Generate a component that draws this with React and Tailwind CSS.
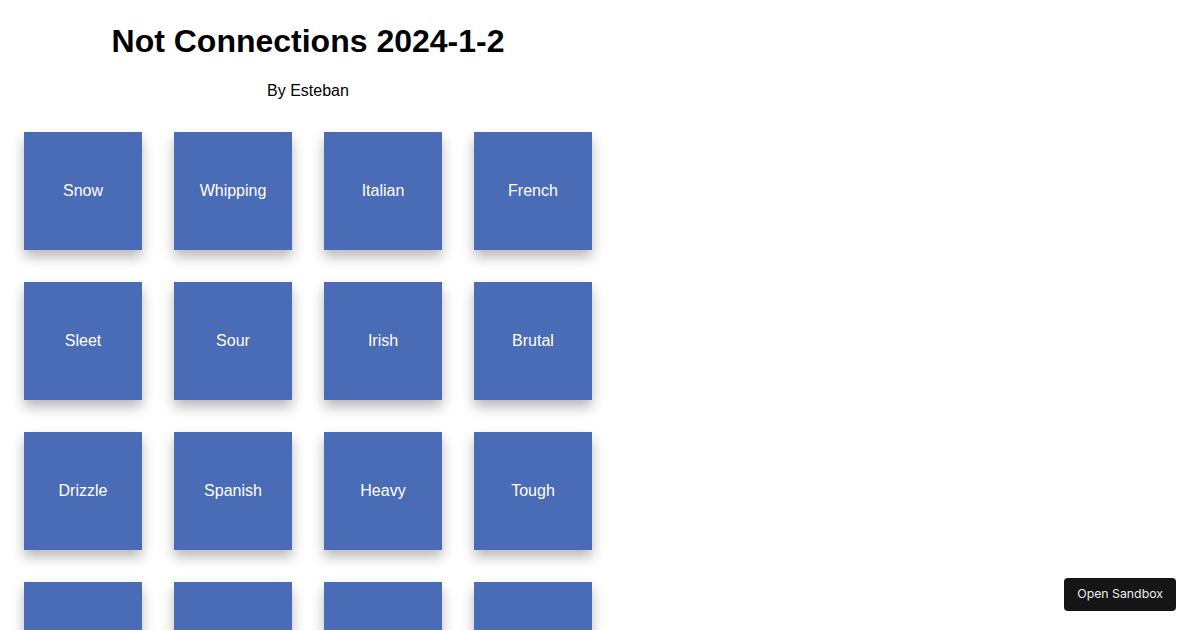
const words = [
  "Snow", "Whipping", "Italian", "French",
  "Sleet", "Sour", "Irish", "Brutal",
  "Drizzle", "Spanish", "Heavy", "Tough",
  "Hail", "Cream", "Greek", "Hard",
];

function Tile({ word }) {
  return (
    <div className="w-[118px] h-[118px] bg-[#4a6bb6] text-white text-[16px] flex items-center justify-center shadow-[0_7px_12px_rgba(0,0,0,0.28)]">
      {word}
    </div>
  );
}

export default function App() {
  return (
    <div className="bg-white min-h-screen font-['Liberation_Sans',Arial,sans-serif] text-black">
      <div className="w-[616px]">
        <h1 className="pt-[23px] text-[32px] leading-[37px] font-bold text-center">
          Not Connections 2024-1-2
        </h1>
        <p className="mt-[22px] text-[16px] leading-[18px] text-center">By Esteban</p>
        <div className="mt-[32px] px-6 grid grid-cols-4 gap-8">
          {words.map((w) => (
            <Tile key={w} word={w} />
          ))}
        </div>
      </div>
      <button className="fixed right-[24px] bottom-[19px] h-[33px] px-[13px] rounded-[4px] bg-[#151515] text-[#ececec] text-[12.3px] font-['Inter',sans-serif]">
        Open Sandbox
      </button>
    </div>
  );
}
